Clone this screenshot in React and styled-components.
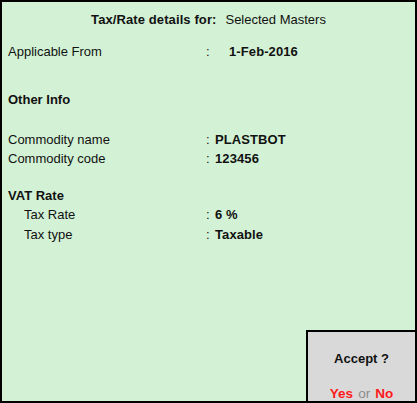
import React from 'react';
import styled, { createGlobalStyle } from 'styled-components';

const Global = createGlobalStyle`
  html, body {
    margin: 0;
    padding: 0;
  }
  body {
    font-family: "Liberation Sans", Arial, sans-serif;
    font-size: 13px;
    color: #111;
  }
`;

const Frame = styled.div`
  width: 417px;
  height: 403px;
  box-sizing: border-box;
  border: 2px solid #000;
  background: #d3f1d5;
  position: relative;
  display: flex;
  flex-direction: column;
  padding: 0 6px;
`;

const Title = styled.div`
  text-align: center;
  margin-top: 9px;
  height: 18px;
  line-height: 18px;
`;

const Bold = styled.span`
  font-weight: bold;
  letter-spacing: 0.1px;
  margin-right: 9px;
`;

const Row = styled.div`
  display: grid;
  grid-template-columns: ${p => (p.$indent ? '182px' : '198px')} ${p => (p.$wide ? '23px' : '9px')} 1fr;
  padding-left: ${p => (p.$indent ? '16px' : '0')};
  height: 19px;
  line-height: 19px;
  margin-top: ${p => p.$gap || 0}px;
`;

const Value = styled.span`
  font-weight: bold;
  letter-spacing: 0.1px;
`;

const Heading = styled.div`
  font-weight: bold;
  height: 19px;
  line-height: 19px;
  margin-top: ${p => p.$gap || 0}px;
`;

const AcceptBox = styled.div`
  position: absolute;
  right: -2px;
  bottom: -2px;
  width: 111px;
  height: 73px;
  box-sizing: border-box;
  border: 2px solid #000;
  background: #d9d9d9;
  display: flex;
  flex-direction: column;
  align-items: center;
`;

const Ask = styled.div`
  font-weight: bold;
  margin-top: 19px;
`;

const Choices = styled.div`
  margin-top: 20px;
  font-weight: bold;
  font-size: 13.5px;
  color: #ff1a1a;
`;

const Or = styled.span`
  color: #8c8c8c;
  font-weight: normal;
  margin: 0 5px;
`;

export default function App() {
  return (
    <>
      <Global />
      <Frame>
        <Title>
          <Bold>Tax/Rate details for:</Bold>Selected Masters
        </Title>
        <Row $gap={13} $wide>
          <span>Applicable From</span>
          <span>:</span>
          <Value>1-Feb-2016</Value>
        </Row>
        <Heading $gap={29}>Other Info</Heading>
        <Row $gap={21}>
          <span>Commodity name</span>
          <span>:</span>
          <Value>PLASTBOT</Value>
        </Row>
        <Row>
          <span>Commodity code</span>
          <span>:</span>
          <Value>123456</Value>
        </Row>
        <Heading $gap={18}>VAT Rate</Heading>
        <Row $indent>
          <span>Tax Rate</span>
          <span>:</span>
          <Value>6 %</Value>
        </Row>
        <Row $indent $gap={1}>
          <span>Tax type</span>
          <span>:</span>
          <Value>Taxable</Value>
        </Row>
        <AcceptBox>
          <Ask>Accept ?</Ask>
          <Choices>
            Yes<Or>or</Or>No
          </Choices>
        </AcceptBox>
      </Frame>
    </>
  );
}
